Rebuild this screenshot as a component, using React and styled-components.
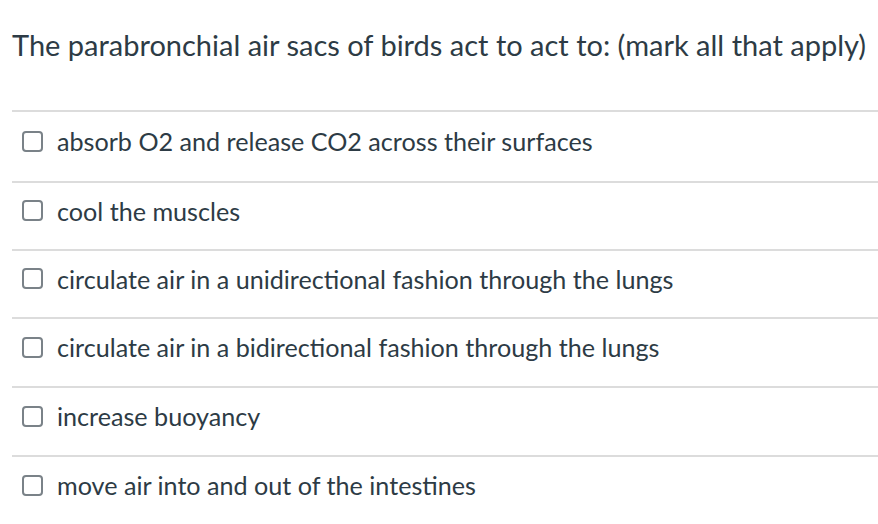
import React from 'react'
import styled, { createGlobalStyle } from 'styled-components'

const GlobalStyle = createGlobalStyle`
  html, body {
    margin: 0;
    padding: 0;
    background: #fff;
  }
  body {
    font-family: Lato, 'Liberation Sans', sans-serif;
    color: #2d3b45;
  }
`

const Wrapper = styled.div`
  width: 878px;
  height: 524px;
  overflow: hidden;
  padding-left: 12px;
  box-sizing: border-box;
`

const Question = styled.h1`
  margin: 0;
  padding: 28px 0 0 0;
  height: 110px;
  box-sizing: border-box;
  font-size: 29px;
  font-weight: 400;
  line-height: 34px;
  white-space: nowrap;
`

const Answers = styled.ul`
  list-style: none;
  margin: 0;
  padding: 0;
`

const Answer = styled.li`
  display: flex;
  align-items: center;
  height: ${p => p.h}px;
  border-top: 2px solid #dcdcdc;
  box-sizing: border-box;
  padding: 0 0 11px 10px;
  gap: 14px;
  font-size: 25.15px;
`

const Box = styled.span`
  flex: none;
  width: 21px;
  height: 21px;
  box-sizing: border-box;
  border: 2px solid #7a8288;
  border-radius: 4px;
  background: #fff;
`

const answers = [
  ['absorb O2 and release CO2 across their surfaces', 71],
  ['cool the muscles', 68],
  ['circulate air in a unidirectional fashion through the lungs', 68],
  ['circulate air in a bidirectional fashion through the lungs', 69],
  ['increase buoyancy', 69],
  ['move air into and out of the intestines', 69],
]

const App = () => {
  return (
    <Wrapper>
      <GlobalStyle />
      <Question>The parabronchial air sacs of birds act to act to: (mark all that apply)</Question>
      <Answers>
        {answers.map(([text, h]) => (
          <Answer key={text} h={h}>
            <Box />
            <span>{text}</span>
          </Answer>
        ))}
      </Answers>
    </Wrapper>
  )
}

export default App
